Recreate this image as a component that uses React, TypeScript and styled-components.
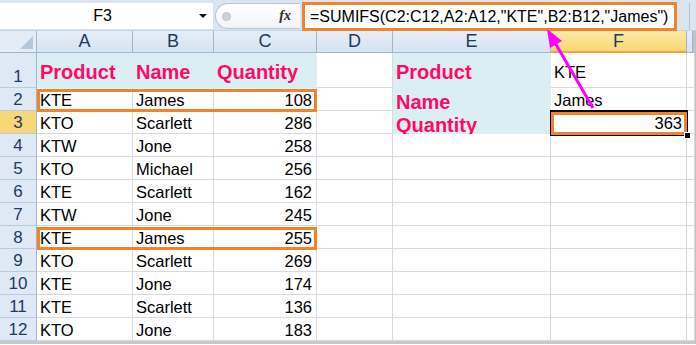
import React from "react";
import styled, { createGlobalStyle } from "styled-components";

// ______________________________________________________
// data

type Row = [string, string, number];

const COLS = ["A", "B", "C", "D", "E", "F", ""];
const COL_WIDTHS = [96, 81, 103, 76, 158, 136, 6];

const rows: Row[] = [
  ["KTE", "James", 108],
  ["KTO", "Scarlett", 286],
  ["KTW", "Jone", 258],
  ["KTO", "Michael", 256],
  ["KTE", "Scarlett", 162],
  ["KTW", "Jone", 245],
  ["KTE", "James", 255],
  ["KTO", "Scarlett", 269],
  ["KTE", "Jone", 174],
  ["KTE", "Scarlett", 136],
  ["KTO", "Jone", 183],
];

const criteria: [string, string | number][] = [
  ["Product", "KTE"],
  ["Name", "James"],
  ["Quantity", 363],
];

const FORMULA = '=SUMIFS(C2:C12,A2:A12,"KTE",B2:B12,"James")';

const GRID = "#dadada";
const FILL = "#daeef3";
const ORANGE = "#f4822a";
const PINK = "#ff0a66";
const HEAD_TEXT = "#1e3a5c";

// ______________________________________________________
// styles

const GlobalStyle = createGlobalStyle`
  html, body {
    margin: 0;
    padding: 0;
    background: #fff;
    overflow: hidden;
  }
  body {
    font-family: "Liberation Sans", Arial, sans-serif;
  }
`;

const Window = styled.div`
  position: relative;
  width: 696px;
  height: 345px;
  overflow: hidden;
  background: #fff;
  display: flex;
  flex-direction: column;
`;

const FormulaBar = styled.div`
  height: 31px;
  flex: none;
  display: flex;
  align-items: stretch;
  background: #dbe5f1;
  padding-top: 3px;
  box-sizing: border-box;
  border-bottom: 1px solid #c5d3e4;
`;

const NameBox = styled.div`
  width: 213px;
  height: 26px;
  background: #fff;
  display: flex;
  align-items: center;
  font-size: 16px;
  color: #000;
`;

const NameText = styled.span`
  flex: 1;
  text-align: center;
  padding-left: 6px;
`;

const DropArrow = styled.span`
  width: 0;
  height: 0;
  margin-right: 6px;
  border-left: 4px solid transparent;
  border-right: 4px solid transparent;
  border-top: 4px solid #111;
`;

const FxArea = styled.div`
  width: 85px;
  height: 26px;
  margin-left: 2px;
  box-sizing: border-box;
  display: flex;
  align-items: center;
  justify-content: space-between;
  padding: 0 9px 0 6px;
  border: 1px solid #b9c4d2;
  border-right: none;
  border-radius: 13px 0 0 13px;
  background: linear-gradient(#ffffff, #f1f4f8);
`;

const Knob = styled.span`
  width: 7px;
  height: 7px;
  border-radius: 50%;
  background: #cfd3d8;
  border: 1px solid #bcc2c9;
`;

const Fx = styled.span`
  font-family: "Liberation Serif", "Times New Roman", serif;
  font-style: italic;
  font-weight: bold;
  font-size: 14px;
  color: #2b2b2b;
`;

const FormulaBox = styled.div`
  width: 375px;
  height: 29px;
  margin: -1px 0 0 2px;
  box-sizing: border-box;
  border: 3px solid ${ORANGE};
  background: #fff;
  display: flex;
  align-items: center;
  padding-left: 5px;
  font-size: 16px;
  color: #000;
  white-space: nowrap;
`;

const BarTail = styled.div`
  flex: 1;
  border-right: 1px solid #b4c3d6;
  margin-right: 6px;
`;

const Sheet = styled.div`
  display: grid;
  grid-template-columns: 37px ${COL_WIDTHS.map((w) => `${w}px`).join(" ")};
  grid-template-rows: 22px 35px repeat(11, 23px);
  width: 693px;
  border-right: 3px solid #c2c2c2;
  border-bottom: 3px solid #c8c8c8;
`;

// every grid item gets its own row / column, so overlays can share a cell
const Placed = styled.div<{ $r: number; $c: number; $span?: number }>`
  grid-row: ${(p) => p.$r};
  grid-column: ${(p) => `${p.$c} / span ${p.$span ?? 1}`};
  box-sizing: border-box;
`;

const Corner = styled(Placed)`
  background: #e4ecf7;
  border-right: 1px solid #9eb6ce;
  border-bottom: 1px solid #9eb6ce;
  position: relative;
  &::after {
    content: "";
    position: absolute;
    right: 3px;
    bottom: 3px;
    width: 0;
    height: 0;
    border-left: 13px solid transparent;
    border-bottom: 13px solid #b7c6d9;
  }
`;

const ColHeader = styled(Placed)<{ $active?: boolean }>`
  display: flex;
  align-items: center;
  justify-content: center;
  font-size: 18px;
  color: ${HEAD_TEXT};
  background: ${(p) =>
    p.$active
      ? "linear-gradient(#fbe9a6, #f9d872)"
      : "linear-gradient(#e6eef8, #d7e3f1)"};
  border-right: 1px solid #9eb6ce;
  border-bottom: ${(p) => (p.$active ? "2px solid #f2a53c" : "1px solid #9eb6ce")};
`;

const RowHeader = styled(Placed)<{ $active?: boolean }>`
  display: flex;
  align-items: flex-end;
  justify-content: center;
  font-size: 17px;
  line-height: 20px;
  color: ${HEAD_TEXT};
  background: ${(p) => (p.$active ? "#f8d67a" : "#dfe8f5")};
  border-right: 1px solid #9eb6ce;
  border-bottom: 1px solid #b9cbe0;
`;

const Cell = styled(Placed)<{ $fill?: boolean; $right?: boolean; $pb?: number }>`
  display: flex;
  align-items: flex-end;
  justify-content: ${(p) => (p.$right ? "flex-end" : "flex-start")};
  padding: 0 4px ${(p) => p.$pb ?? 0}px 3px;
  font-size: 16.5px;
  line-height: 19px;
  color: #000;
  white-space: nowrap;
  background: ${(p) => (p.$fill ? FILL : "#fff")};
  border-right: 1px solid ${(p) => (p.$fill ? FILL : GRID)};
  border-bottom: 1px solid ${(p) => (p.$fill ? FILL : GRID)};
`;

const Label = styled.span`
  color: ${PINK};
  font-weight: bold;
  font-size: 20px;
  line-height: 16px;
`;

const RowMark = styled(Placed)`
  margin: 1px 0 -1px 0;
  border: 3px solid ${ORANGE};
  pointer-events: none;
  z-index: 2;
`;

const Selection = styled(Placed)`
  margin: -1px -1px -2px -1px;
  border: 1px solid #000;
  border-top-width: 2px;
  box-shadow: inset 0 0 0 3px ${ORANGE};
  position: relative;
  z-index: 2;
  pointer-events: none;
  &::after {
    content: "";
    position: absolute;
    right: -4px;
    bottom: -4px;
    width: 5px;
    height: 5px;
    background: #000;
    border: 1px solid #fff;
  }
`;

const ArrowLayer = styled.svg`
  position: absolute;
  left: 0;
  top: 0;
  width: 696px;
  height: 345px;
  pointer-events: none;
  z-index: 5;
`;

// ______________________________________________________
// component

const App: React.FC = () => {
  // grid row index: 1 = column header, sheet row n = n + 1
  const sheetRows: React.ReactNode[] = [];

  for (let n = 1; n <= 12; n++) {
    const r = n + 1;
    const data = n >= 2 ? rows[n - 2] : null;
    const crit = criteria[n - 1];
    const tall = n === 1;

    sheetRows.push(
      <RowHeader key={`h${n}`} $r={r} $c={1} $active={n === 3}>
        {n}
      </RowHeader>
    );

    if (data) {
      sheetRows.push(
        <Cell key={`a${n}`} $r={r} $c={2}>{data[0]}</Cell>,
        <Cell key={`b${n}`} $r={r} $c={3}>{data[1]}</Cell>,
        <Cell key={`c${n}`} $r={r} $c={4} $right>{data[2]}</Cell>
      );
    } else {
      ["Product", "Name", "Quantity"].forEach((t, i) =>
        sheetRows.push(
          <Cell key={`t${i}`} $r={r} $c={2 + i} $fill $pb={7}>
            <Label>{t}</Label>
          </Cell>
        )
      );
    }

    sheetRows.push(<Cell key={`d${n}`} $r={r} $c={5} />);

    if (crit) {
      sheetRows.push(
        <Cell key={`e${n}`} $r={r} $c={6} $fill $pb={tall ? 7 : 0}>
          <Label>{crit[0]}</Label>
        </Cell>,
        <Cell
          key={`f${n}`}
          $r={r}
          $c={7}
          $right={typeof crit[1] === "number"}
          $pb={tall ? 5 : 0}
        >
          {crit[1]}
        </Cell>
      );
    } else {
      sheetRows.push(
        <Cell key={`e${n}`} $r={r} $c={6} />,
        <Cell key={`f${n}`} $r={r} $c={7} />
      );
    }

    sheetRows.push(<Cell key={`g${n}`} $r={r} $c={8} />);
  }

  return (
    <Window>
      <GlobalStyle />
      <FormulaBar>
        <NameBox>
          <NameText>F3</NameText>
          <DropArrow />
        </NameBox>
        <FxArea>
          <Knob />
          <Fx>fx</Fx>
        </FxArea>
        <FormulaBox>{FORMULA}</FormulaBox>
        <BarTail />
      </FormulaBar>

      <Sheet>
        <Corner $r={1} $c={1} />
        {COLS.map((c, i) => (
          <ColHeader key={i} $r={1} $c={i + 2} $active={c === "F"}>
            {c}
          </ColHeader>
        ))}

        {sheetRows}

        <RowMark $r={3} $c={2} $span={3} />
        <RowMark $r={9} $c={2} $span={3} />
        <Selection $r={4} $c={7} />
      </Sheet>

      <ArrowLayer viewBox="0 0 696 345">
        <line x1="593" y1="108" x2="554" y2="41" stroke="#ff00ff" strokeWidth="3" />
        <polygon points="547,29 562,41 550,48" fill="#ff00ff" />
      </ArrowLayer>
    </Window>
  );
};

export default App;
